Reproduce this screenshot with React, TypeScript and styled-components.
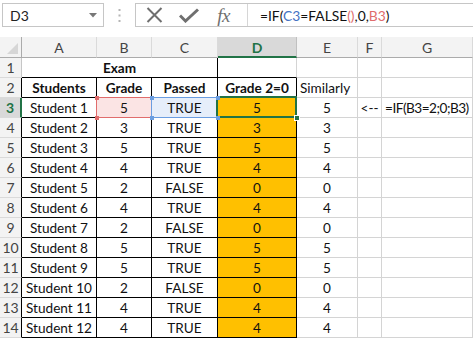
import React from "react";
import styled, { createGlobalStyle } from "styled-components";

const Global = createGlobalStyle`
  html, body { margin: 0; padding: 0; background: #fff; }
  body { font-family: Lato, "Open Sans", sans-serif; color: #000; }
  * { box-sizing: border-box; }
`;

const FONT = `Lato, "Open Sans", sans-serif`;
const GREEN = "#217346";
const GRID = "#d4d4d4";

const Page = styled.div`
  width: 473px;
  height: 338px;
  overflow: hidden;
  background: #fff;
  display: flex;
  flex-direction: column;
`;

const TopBar = styled.div`
  height: 37px;
  flex: none;
  display: flex;
  align-items: flex-start;
  padding: 3px 0 0 2px;
`;

const NameBox = styled.div`
  width: 102px;
  height: 24px;
  border: 1px solid #c6c6c6;
  display: flex;
  align-items: center;
  justify-content: space-between;
  padding: 0 6px 0 7px;
  font-family: ${FONT};
  font-size: 14px;
  color: #222;
`;

const Dots = styled.div`
  width: 31px;
  height: 24px;
  display: flex;
  align-items: center;
  justify-content: center;
`;

const FormulaBox = styled.div`
  flex: 1;
  height: 24px;
  border: 1px solid #c6c6c6;
  border-right: none;
  display: flex;
  align-items: center;
`;

const IconSlot = styled.div<{ $w: number }>`
  width: ${(p) => p.$w}px;
  height: 22px;
  display: flex;
  align-items: center;
  justify-content: center;
  flex: none;
`;

const Fx = styled.span`
  font-family: "Liberation Serif", serif;
  font-style: italic;
  font-size: 19px;
  color: #6f6f6f;
  letter-spacing: -0.5px;
  line-height: 1;
`;

const Divider = styled.div`
  width: 1px;
  height: 22px;
  background: #d6d6d6;
  margin-left: 5px;
  flex: none;
`;

const FormulaText = styled.div`
  padding-left: 12px;
  font-family: ${FONT};
  font-size: 13.8px;
  color: #111;
  white-space: nowrap;
`;

const Ref = styled.span<{ $c: string }>`
  color: ${(p) => p.$c};
`;

const Sheet = styled.div`
  display: grid;
  grid-template-columns: 22px 75px 55px 66px 79px 61px 24px 91px;
  grid-template-rows: 21px repeat(14, 20px);
  font-family: ${FONT};
  font-size: 13.6px;
`;

const ColHead = styled.div<{ $sel?: boolean }>`
  background: ${(p) => (p.$sel ? "#d9d9d9" : "#f3f3f3")};
  border-right: 1px solid ${(p) => (p.$sel ? "#c0c0c0" : "#dadada")};
  border-bottom: ${(p) => (p.$sel ? `2px solid ${GREEN}` : "1px solid #ababab")};
  color: ${(p) => (p.$sel ? GREEN : "#444")};
  font-weight: ${(p) => (p.$sel ? 700 : 400)};
  display: flex;
  align-items: center;
  justify-content: center;
  font-size: 14px;
  padding-top: ${(p) => (p.$sel ? 1 : 0)}px;
`;

const Corner = styled.div`
  background: #f3f3f3;
  border-right: 1px solid #ababab;
  border-bottom: 1px solid #ababab;
  display: flex;
  align-items: flex-end;
  justify-content: flex-end;
  padding: 0 3px 3px 0;
`;

const RowHead = styled.div<{ $sel?: boolean; $edge: string }>`
  background: ${(p) => (p.$sel ? "#d9d9d9" : "#f3f3f3")};
  border-bottom: 1px solid #dadada;
  border-right: ${(p) => (p.$sel ? `2px solid ${GREEN}` : `1px solid ${p.$edge}`)};
  color: ${(p) => (p.$sel ? GREEN : "#444")};
  font-weight: ${(p) => (p.$sel ? 700 : 400)};
  display: flex;
  align-items: center;
  justify-content: center;
  font-size: 14px;
`;

const Cell = styled.div<{
  $bold?: boolean;
  $align?: "left" | "center";
  $fill?: string;
  $right?: string;
  $bottom?: string;
  $span?: number;
  $tight?: boolean;
}>`
  position: relative;
  grid-column: span ${(p) => p.$span ?? 1};
  background: ${(p) => p.$fill ?? "#fff"};
  border-right: 1px solid ${(p) => p.$right ?? GRID};
  border-bottom: 1px solid ${(p) => p.$bottom ?? GRID};
  font-weight: ${(p) => (p.$bold ? 700 : 400)};
  display: flex;
  align-items: center;
  justify-content: ${(p) => (p.$align === "left" ? "flex-start" : "center")};
  padding: ${(p) => (p.$align === "left" ? "0 0 0 3px" : "0")};
  letter-spacing: ${(p) => (p.$tight ? "-0.5px" : "normal")};
  white-space: nowrap;
  color: #111;
`;

const RefFrame = styled.div<{ $c: string; $bg: string }>`
  position: absolute;
  inset: -1px -1px -1px -1px;
  border: 1px solid ${(p) => p.$c};
  background: ${(p) => p.$bg};
  z-index: 1;
`;

const Handle = styled.div<{ $c: string; $x: "l" | "r"; $y: "t" | "b" }>`
  position: absolute;
  width: 4px;
  height: 4px;
  background: ${(p) => p.$c};
  ${(p) => (p.$x === "l" ? "left" : "right")}: -2.5px;
  ${(p) => (p.$y === "t" ? "top" : "bottom")}: -2.5px;
  z-index: 3;
`;

const CellText = styled.span`
  position: relative;
  z-index: 2;
`;

const SelFrame = styled.div`
  position: absolute;
  left: -2px;
  top: -2px;
  right: -1px;
  bottom: -1px;
  border: 2px solid ${GREEN};
  z-index: 2;
`;

const FillHandle = styled.div`
  position: absolute;
  right: -4px;
  bottom: -4px;
  width: 6px;
  height: 6px;
  background: ${GREEN};
  border: 1px solid #fff;
  z-index: 3;
`;

const cols = ["A", "B", "C", "D", "E", "F", "G"];

const data: [string, number, boolean][] = [
  ["Student 1", 5, true],
  ["Student 2", 3, true],
  ["Student 3", 5, true],
  ["Student 4", 4, true],
  ["Student 5", 2, false],
  ["Student 6", 4, true],
  ["Student 7", 2, false],
  ["Student 8", 5, true],
  ["Student 9", 5, true],
  ["Student 10", 2, false],
  ["Student 11", 4, true],
  ["Student 12", 4, true],
];

const RED = "#e06c6c";
const BLUE = "#6a9de0";
const ORANGE = "#ffc000";
const B = "#000";

const Corners = ({ c }: { c: string }) => (
  <>
    <Handle $c={c} $x="l" $y="t" />
    <Handle $c={c} $x="r" $y="t" />
    <Handle $c={c} $x="l" $y="b" />
    <Handle $c={c} $x="r" $y="b" />
  </>
);

export default function App() {
  return (
    <Page>
      <Global />
      <TopBar>
        <NameBox>
          <span>D3</span>
          <svg width="8" height="5" viewBox="0 0 8 5">
            <path d="M0 0 L8 0 L4 4.5 Z" fill="#777" />
          </svg>
        </NameBox>
        <Dots>
          <svg width="3" height="13" viewBox="0 0 3 13">
            <rect x="0.5" y="0" width="2" height="2" fill="#b5b5b5" />
            <rect x="0.5" y="5.5" width="2" height="2" fill="#b5b5b5" />
            <rect x="0.5" y="11" width="2" height="2" fill="#b5b5b5" />
          </svg>
        </Dots>
        <FormulaBox>
          <IconSlot $w={36}>
            <svg width="17" height="16" viewBox="0 0 17 16">
              <path d="M1.5 1 L15.5 15 M15.5 1 L1.5 15" stroke="#6f6f6f" strokeWidth="2" fill="none" />
            </svg>
          </IconSlot>
          <IconSlot $w={33}>
            <svg width="20" height="15" viewBox="0 0 20 15">
              <path d="M1 7.5 L6.5 13 L19 1.5" stroke="#6f6f6f" strokeWidth="3" fill="none" />
            </svg>
          </IconSlot>
          <IconSlot $w={37}>
            <Fx>fx</Fx>
          </IconSlot>
          <Divider />
          <FormulaText>
            =IF(<Ref $c="#4472c4">C3</Ref>=FALSE<Ref $c={RED}>()</Ref>,0,<Ref $c={RED}>B3</Ref>)
          </FormulaText>
        </FormulaBox>
      </TopBar>
      <Sheet>
        <Corner>
          <svg width="11" height="11" viewBox="0 0 11 11">
            <path d="M11 0 L11 11 L0 11 Z" fill="#d6d6d6" />
          </svg>
        </Corner>
        {cols.map((c) => (
          <ColHead key={c} $sel={c === "D"}>
            {c}
          </ColHead>
        ))}

        <RowHead $edge="#c6c6c6">1</RowHead>
        <Cell $span={3} $bold $right={B} $bottom={B}>
          Exam
        </Cell>
        <Cell $bottom={B} />
        <Cell />
        <Cell />
        <Cell />

        <RowHead $edge={B}>2</RowHead>
        <Cell $bold $right={B} $bottom={B}>Students</Cell>
        <Cell $bold $right={B} $bottom={B}>Grade</Cell>
        <Cell $bold $right={B} $bottom={B}>Passed</Cell>
        <Cell $bold $right={B} $bottom={B}>Grade 2=0</Cell>
        <Cell $align="left">Similarly</Cell>
        <Cell />
        <Cell />

        {data.map(([name, g, pass], i) => {
          const row = i + 3;
          const first = row === 3;
          const res = pass ? g : 0;
          return (
            <React.Fragment key={row}>
              <RowHead $edge={B} $sel={first}>
                {row}
              </RowHead>
              <Cell $right={B} $bottom={B}>{name}</Cell>
              <Cell $right={B} $bottom={B}>
                {first && (
                  <>
                    <RefFrame $c={RED} $bg="#fbe4e4" />
                    <Corners c={RED} />
                  </>
                )}
                <CellText>{g}</CellText>
              </Cell>
              <Cell $right={B} $bottom={B}>
                {first && (
                  <>
                    <RefFrame $c={BLUE} $bg="#e6eefa" />
                    <Corners c={BLUE} />
                  </>
                )}
                <CellText>{pass ? "TRUE" : "FALSE"}</CellText>
              </Cell>
              <Cell $right={B} $bottom={B} $fill={ORANGE}>
                {first && (
                  <>
                    <SelFrame />
                    <FillHandle />
                  </>
                )}
                <CellText>{res}</CellText>
              </Cell>
              <Cell>{res}</Cell>
              <Cell>{first ? <span>&lt;--</span> : null}</Cell>
              <Cell $align="left" $tight>{first ? "=IF(B3=2;0;B3)" : null}</Cell>
            </React.Fragment>
          );
        })}
      </Sheet>
    </Page>
  );
}
